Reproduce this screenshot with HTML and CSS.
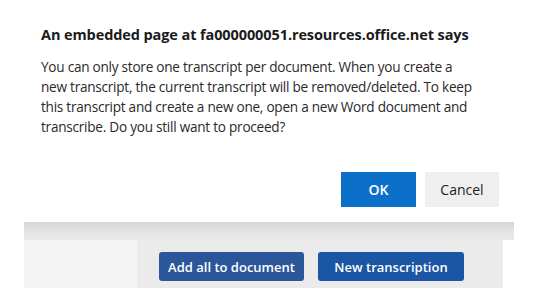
FILE: index.html
```html
<!DOCTYPE html>
<html>

<head>
  <meta charset="UTF-8">
  <meta name="viewport" content="width=device-width, initial-scale=1">
  <title>Transcribe</title>

  <link rel="stylesheet" href="styles.css">
</head>

<body>
  <div class="page">
    <div class="dialogo">
      <p class="titulo">An embedded page at fa000000051.resources.office.net says</p>
      <p class="mensagem">You can only store one transcript per document. When you create a new transcript, the current transcript will be removed/deleted. To keep this transcript and create a new one, open a new Word document and transcribe. Do you still want to proceed?</p>
      <div class="acoes">
        <button class="botao ok">OK</button>
        <button class="botao cancelar">Cancel</button>
      </div>
    </div>

    <div class="painel">
      <div class="faixa"></div>
      <div class="corpo">
        <div class="lado"></div>
        <div class="rodape">
          <button class="botao_word">Add all to document</button>
          <button class="botao_word novo">New transcription</button>
        </div>
      </div>
    </div>
  </div>
</body>

</html>
```

FILE: styles.css
```css
* {
  margin: 0;
  padding: 0;
  border: none;
  box-sizing: border-box;
}

body {
  background-color: #fff;
  font-family: "Open Sans", "Noto Sans", sans-serif;
  color: #222;
}

.page {
  width: 540px;
  height: 298px;
  overflow: hidden;
}

.painel {
  margin-left: 24px;
}

/* sombra do dialogo sobre o painel */
.faixa {
  width: 490px;
  height: 18px;
  background: linear-gradient(#d6d6d6, #e4e4e4 55%, #ebebeb);
}

.corpo {
  display: flex;
  width: 479px;
  height: 48px;
  background-color: #ebebeb;
}

.lado {
  width: 115px;
  background-color: #f3f3f3;
  border-right: 1px solid #e3e3e3;
}

.rodape {
  flex: 1;
  display: flex;
  align-items: flex-end;
  gap: 14px;
  padding: 0 0 7px 20px;
}

.botao_word {
  width: 145px;
  height: 29px;
  border-radius: 3px;
  background-color: #2b579a;
  color: #fff;
  font-family: inherit;
  font-size: 13px;
  font-weight: 600;
}

.novo {
  width: 146px;
  background-color: #1a56a4;
}

.dialogo {
  width: 500px;
  height: 222px;
  padding: 24px 28px 0 41px;
  background-color: #fff;
}

.titulo {
  font-size: 14.5px;
  font-weight: 700;
  color: #1b1b1b;
  line-height: 22px;
  letter-spacing: -0.1px;
}

.mensagem {
  margin-top: 11px;
  font-size: 13.6px;
  line-height: 20px;
  letter-spacing: -0.25px;
  color: #2a2a2a;
}

.acoes {
  display: flex;
  justify-content: flex-end;
  gap: 9px;
  margin-top: 35px;
  margin-right: -27px;
}

.botao {
  width: 75px;
  height: 35px;
  font-family: inherit;
  font-size: 14px;
  font-weight: 600;
}

.ok {
  background-color: #0d70c8;
  color: #fff;
}

.cancelar {
  width: 74px;
  background-color: #efefef;
  color: #222;
  font-weight: 400;
}
```
